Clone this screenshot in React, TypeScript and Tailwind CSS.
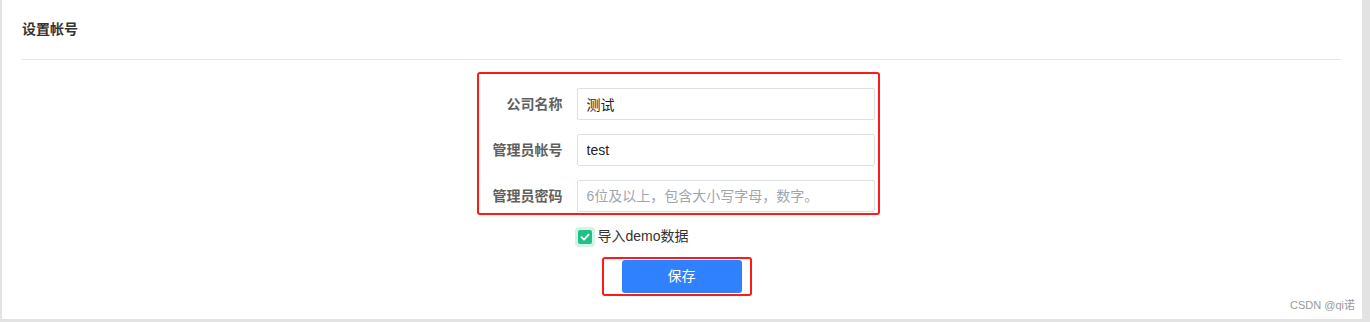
import React, { useState } from 'react';

const fontStack = '"Liberation Sans", "Noto Sans CJK SC", sans-serif';

const App: React.FC = () => {
  const [company, setCompany] = useState('测试');
  const [account, setAccount] = useState('test');
  const [password, setPassword] = useState('');
  const [importDemo, setImportDemo] = useState(true);

  const fields = [
    { label: '公司名称', value: company, onChange: setCompany, placeholder: '' },
    { label: '管理员帐号', value: account, onChange: setAccount, placeholder: '' },
    {
      label: '管理员密码',
      value: password,
      onChange: setPassword,
      placeholder: '6位及以上，包含大小写字母，数字。',
    },
  ];

  return (
    <div
      className="flex h-[322px] w-full bg-[#e3e3e3] pb-[3px] pl-[2px] pr-[8px]"
      style={{ fontFamily: fontStack }}
    >
      <div className="relative flex h-[319px] flex-1 flex-col bg-white pl-5 pr-[21px]">
        {/* Header */}
        <div className="flex h-[60px] items-center border-b border-[#e6e6e6]">
          <h2 className="text-[14px] font-semibold text-[#333]">设置帐号</h2>
        </div>

        <div className="flex flex-col items-center">
          {/* Form */}
          <div className="mr-[7px] mt-[12px] w-[403px] rounded-[3px] border-2 border-[#ff1a1a] pb-px pr-[3px] pt-[14px]">
            <div className="grid grid-cols-[84px_298px] gap-x-[14px] gap-y-[14px]">
              {fields.map((f) => (
                <React.Fragment key={f.label}>
                  <label className="flex items-center justify-end text-[14px] font-bold text-[#5f5f5f]">
                    {f.label}
                  </label>
                  <input
                    className="h-[32px] rounded-[2px] border border-[#dcdfe6] px-[9px] text-[14px] text-[#222] outline-none placeholder:text-[#a0a6b0]"
                    value={f.value}
                    placeholder={f.placeholder}
                    onChange={(e) => f.onChange(e.target.value)}
                  />
                </React.Fragment>
              ))}
            </div>
          </div>

          {/* Import demo checkbox */}
          <div className="mr-[7px] mt-[11px] w-[403px] pl-[98px]">
            <label className="flex cursor-pointer items-center gap-[3px]">
              <span
                className="flex h-[20px] w-[20px] items-center justify-center rounded-[4px] bg-[#d3f4e5]"
                onClick={() => setImportDemo(!importDemo)}
              >
                <span className="flex h-[14px] w-[14px] items-center justify-center rounded-[2px] bg-[#21c08a]">
                  {importDemo && (
                    <svg width="10" height="10" viewBox="0 0 10 10" fill="none">
                      <path
                        d="M1.5 5.2 L4 7.6 L8.6 2.6"
                        stroke="white"
                        strokeWidth="1.8"
                        strokeLinecap="round"
                        strokeLinejoin="round"
                      />
                    </svg>
                  )}
                </span>
              </span>
              <span className="text-[14px] text-[#333]">导入demo数据</span>
            </label>
          </div>

          {/* Save */}
          <div className="mr-[10px] mt-[10px] rounded-[3px] border-2 border-[#ff1a1a] py-px pl-[18px] pr-[8px]">
            <button className="h-[33px] w-[120px] rounded-[3px] bg-[#3081fd] text-[14px] text-white">
              保存
            </button>
          </div>
        </div>

        <span className="absolute bottom-[6px] right-[7px] text-[11px] text-[#999]">
          CSDN @qi诺
        </span>
      </div>
    </div>
  );
};

export default App;
